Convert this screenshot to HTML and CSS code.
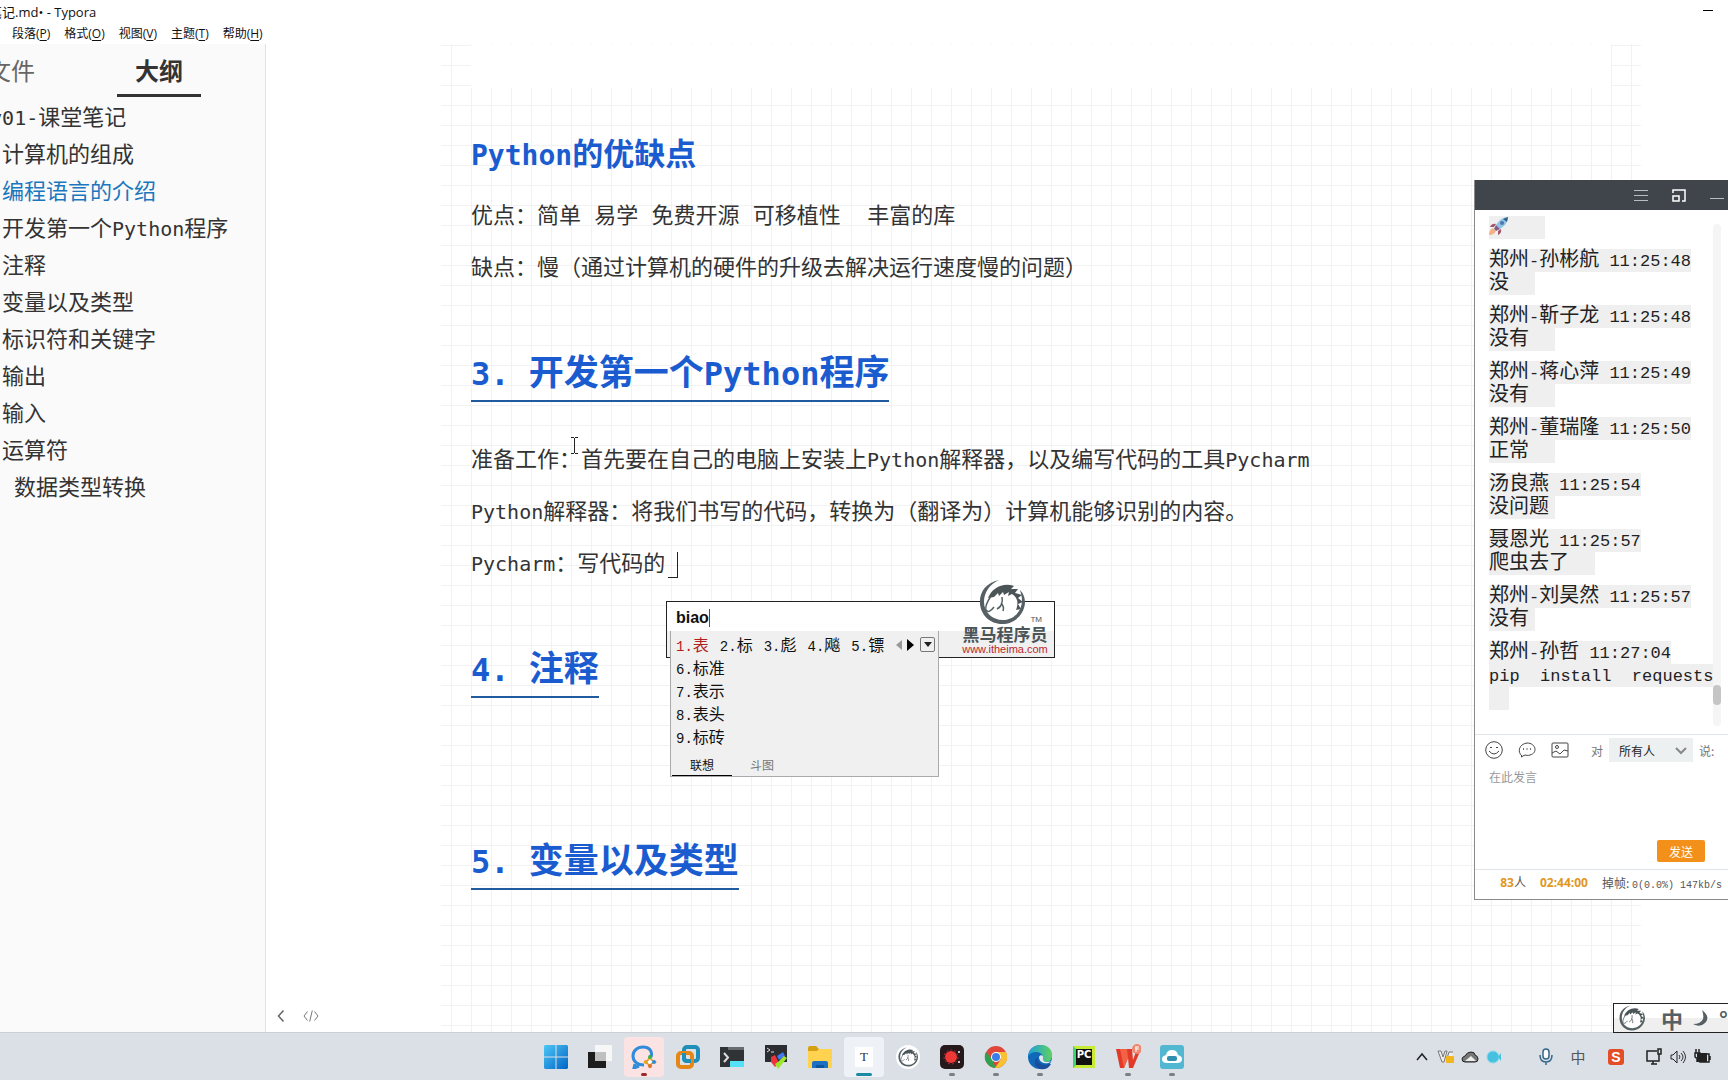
FILE: index.html
```
<!DOCTYPE html>
<html lang="zh-CN">
<head>
    <meta charset="UTF-8">
    <meta name="viewport" content="width=device-width, initial-scale=1.0">
    <title>课堂笔记.md - Typora</title>
    <link rel="stylesheet" href="styles.css">
</head>
<body>
    <svg class="sprite" aria-hidden="true">
        <symbol id="horse" viewBox="0 0 46 46">
            <circle cx="23" cy="24" r="19" fill="#fff"/>
            <path d="M20 1C7 4 0 13 1 25c1 11 10 20 22 20 12 0 22-9 23-21 0-6-2-10-5-13 1 4 2 7 2 10 0 11-8 20-19 20S5 33 5 23C5 13 11 5 20 1z" fill="#566064"/>
            <path d="M9 19C13 9 24 3 35 7l-3 3 7 0-3 4 7 2-4 3 5 4-5 2 3 5-5 1c3-8 1-13-4-16l-4 2 1-4-5 3-1-3-4 4-1-3-4 4z" fill="#4b5558"/>
            <path d="M12 17C8 23 6 28 7 31c2 3 5 1 8-3M23 18c1 6-1 10-5 12M22 24c2 2 3 5 2 8" fill="none" stroke="#566064" stroke-width="1.5"/>
        </symbol>
    </svg>

    <div class="desktop">
        <div class="app">
            <header class="titlebar">
                <div class="title-row">
                    <span class="title">堂笔记.md• - Typora</span>
                    <button class="minimize" aria-label="最小化"></button>
                </div>
                <nav class="menu">
                    <button>段落(<u>P</u>)</button>
                    <button>格式(<u>O</u>)</button>
                    <button>视图(<u>V</u>)</button>
                    <button>主题(<u>T</u>)</button>
                    <button>帮助(<u>H</u>)</button>
                </nav>
            </header>

            <div class="workspace">
                <aside class="sidebar">
                    <div class="tabs">
                        <button class="tab">文件</button>
                        <button class="tab active">大纲</button>
                    </div>
                    <nav class="outline">
                        <a href="#top" class="level-1"><span class="en">Day01-</span>课堂笔记</a>
                        <a href="#top">计算机的组成</a>
                        <a href="#top" class="active">编程语言的介绍</a>
                        <a href="#first">开发第一个<span class="en">Python</span>程序</a>
                        <a href="#comment">注释</a>
                        <a href="#types">变量以及类型</a>
                        <a href="#top">标识符和关键字</a>
                        <a href="#top">输出</a>
                        <a href="#top">输入</a>
                        <a href="#top">运算符</a>
                        <a href="#top" class="level-3">数据类型转换</a>
                    </nav>
                </aside>

                <main class="editor">
                    <article class="note" id="top">
                        <div class="code-block"></div>
                        <h3><span class="en">Python</span>的优缺点</h3>
                        <p>优点：简单<span class="en space"> </span>易学<span class="en space"> </span>免费开源<span class="en space"> </span>可移植性<span class="en space">  </span>丰富的库</p>
                        <p>缺点：慢（通过计算机的硬件的升级去解决运行速度慢的问题）</p>
                        <h2 id="first"><span class="en">3. </span>开发第一个<span class="en">Python</span>程序</h2>
                        <p>准备工作：首先要在自己的电脑上安装上<span class="en">Python</span>解释器，以及编写代码的工具<span class="en">Pycharm</span></p>
                        <p><span class="en">Python</span>解释器：将我们书写的代码，转换为（翻译为）计算机能够识别的内容。</p>
                        <p><span class="en">Pycharm</span>：写代码的<span class="composing"></span></p>
                        <h2 id="comment"><span class="en">4. </span>注释</h2>
                        <p></p>
                        <h2 id="types"><span class="en">5. </span>变量以及类型</h2>
                    </article>
                    <div class="editor-tools">
                        <button aria-label="收起侧边栏"><svg width="16" height="16" viewBox="0 0 16 16"><path d="M10.500 2.500L5.500 8l5 5.500" fill="none" stroke="#666" stroke-width="1.500"/></svg></button>
                        <button aria-label="源代码模式"><svg width="16" height="16" viewBox="0 0 16 16"><path d="M4.500 3.500L1 8l3.500 4.500M11.500 3.500L15 8l-3.500 4.500M9.300 2.500L6.700 13.500" fill="none" stroke="#777"/></svg></button>
                    </div>
                </main>
            </div>
        </div>

        <footer class="taskbar">
            <div></div>
            <div class="task-icons">
                <button class="task" aria-label="开始"><svg width="24" height="24"><defs><linearGradient id="win" x2="1" y2="1"><stop stop-color="#4cc8f5"/><stop offset="1" stop-color="#0063c6"/></linearGradient></defs><path d="M1 0h10.500v11.500H0V1zM12.500 0H23l1 1v10.500H12.500zM0 12.500h11.500V24H1l-1-1zM12.500 12.500H24V23l-1 1H12.500z" fill="url(#win)"/></svg></button>
                <button class="task" aria-label="任务视图"><svg width="24" height="24"><rect x="0" y="7" width="18" height="16" fill="#1d1d1d"/><rect x="7" y="0" width="17" height="16" fill="#f7f7f7"/><rect x="7" y="7" width="11" height="9" fill="#bfc0bf"/></svg></button>
                <button class="task alert" aria-label="企业微信"><svg width="26" height="24"><path d="M4 19l-1 4 5-2M20 12C22 6 18 2 12 2 6 2 2 6 2 11c0 5 4 9 11 9" fill="none" stroke="#2f8cdb" stroke-width="3"/><path d="M19 11q0 4 5 6-5 1-5 6-1-5-6-6 5-1 6-6z" fill="#fff" stroke="#e99b22" stroke-width="1.500"/><circle cx="19" cy="12" r="2" fill="#3aaf4c"/><circle cx="23" cy="17" r="2" fill="#2f8cdb"/><circle cx="19" cy="21" r="2" fill="#e0702f"/><circle cx="15" cy="17" r="2" fill="#e9a322"/></svg></button>
                <button class="task" aria-label="VMware"><svg width="26" height="26"><rect x="9" y="3" width="14" height="14" rx="3" fill="none" stroke="#1d8fb8" stroke-width="4"/><rect x="3" y="9" width="14" height="14" rx="3" fill="none" stroke="#e48716" stroke-width="4"/><path d="M9 9v5q0 3 3 3h4" fill="none" stroke="#1d8fb8" stroke-width="4"/></svg></button>
                <button class="task" aria-label="终端"><svg width="24" height="20"><rect width="24" height="20" fill="#303336"/><path d="M8 0h16v3H8z" fill="#686b6e"/><path d="M4 6l4 4.500L4 15" fill="none" stroke="#ddd" stroke-width="2"/><path d="M10 14h14v6H10z" fill="#54e0f6"/></svg></button>
                <button class="task" aria-label="FinalShell"><svg width="24" height="24"><path d="M1 0h22v17H1z" fill="#2b2d30"/><path d="M3 3l3 2-3 2M7 7h3" stroke="#ddd" fill="none"/><path d="M7 12l4-2 4 8-4 4-4-5z" fill="#f0323a"/><path d="M13 11l6-4 2 4-6 4z" fill="#4478f0"/><path d="M11 19l3-2 6-6 3 2-9 11z" fill="#9be62c"/></svg></button>
                <button class="task" aria-label="文件资源管理器"><svg width="26" height="24"><path d="M1 3q0-2 2-2h6l3 3h12q1 0 1 2v16H1z" fill="#d6a013"/><path d="M1 6h9l2-2h13v18q0 1-2 1H2q-1 0-1-1z" fill="#ffd34f"/><path d="M5 23v-5q0-2 2-2h12q2 0 2 2v5z" fill="#1c6fc2"/><path d="M9 23v-3h8v3z" fill="#0e559d"/></svg></button>
                <button class="task current" aria-label="Typora"><span class="typora">T</span></button>
                <button class="task" aria-label="黑马程序员"><span class="round"><svg width="20" height="20"><use href="#horse"/></svg></span></button>
                <button class="task running" aria-label="录屏"><svg width="24" height="24"><rect width="24" height="24" rx="5" fill="#25191c"/><circle cx="11" cy="12" r="6" fill="#ee3838"/><circle cx="11" cy="12" r="7" fill="none" stroke="#a32a2e" stroke-dasharray="2 2"/><circle cx="19" cy="7" r="1" fill="#fff"/><circle cx="19" cy="17" r="1" fill="#fff"/></svg></button>
                <button class="task running" aria-label="Chrome"><svg width="24" height="24"><circle cx="12" cy="12" r="11" fill="#e0473a"/><path d="M2 7L8 14l4 9C4 23-2 14 2 7z" fill="#32a052"/><path d="M12 7h10c4 8-3 17-11 16l6-9z" fill="#f8c332"/><circle cx="12" cy="12" r="5" fill="#fff"/><circle cx="12" cy="12" r="4" fill="#3c7ee8"/></svg></button>
                <button class="task running" aria-label="Edge"><svg width="26" height="26"><defs><linearGradient id="edge"><stop stop-color="#1da0de"/><stop offset="1" stop-color="#5fd060"/></linearGradient></defs><circle cx="13" cy="13" r="12" fill="#1068b8"/><path d="M1 12C2 5 7 1 14 1c8 0 12 6 11 12-1 5-6 6-9 4-2-1 0-2 0-4C15 7 5 6 1 12z" fill="url(#edge)"/><path d="M11 13c-2 5 4 10 11 7l2 0c-3 5-7 6-11 5-6-2-7-9-2-12z" fill="#1b4f9d"/><path d="M12 13c1-3 5-2 4 1-1 4 4 5 8 3-2 4-12 3-12-4z" fill="#dfe8ee"/></svg></button>
                <button class="task" aria-label="PyCharm"><span class="pycharm">PC</span></button>
                <button class="task running" aria-label="WPS"><svg width="26" height="26"><path d="M1 5h6l1 11 4-11h5l1 11L22 5h4l-8 19h-4l-1-10-4 10H5z" fill="#e23a28"/><path d="M5 5l4 19 4-10-1-9z" fill="#f36245"/><circle cx="22" cy="5" r="5" fill="#f1876e"/><path d="M20 3h4M20 5h4M21 3v5" stroke="#fff"/></svg></button>
                <button class="task running" aria-label="云课堂"><svg width="24" height="24"><rect width="24" height="24" rx="3" fill="#52b8d1"/><path d="M7 18q-5 0-5-4 0-3 4-4 1-5 6-5 5 0 6 5 4 1 4 4 0 4-5 4z" fill="#fff"/><rect x="7" y="11" width="10" height="5" rx="2" fill="#2e8fae"/></svg></button>
            </div>
            <div class="tray">
                <button class="tray-item" aria-label="显示隐藏的图标"><svg width="14" height="14"><path d="M2 10l5-6 5 6" fill="none" stroke="#222" stroke-width="1.500"/></svg></button>
                <button class="tray-item" aria-label="虚拟机"><svg width="18" height="14"><path d="M1 1h3l2 6 2-6h2L7 12H5zM16 2h-4q-3 5 0 9h3" fill="#eee" stroke="#777"/><rect x="9" y="6" width="8" height="7" rx="1" fill="#f3b71d"/></svg></button>
                <button class="tray-item" aria-label="OneDrive"><svg width="18" height="14"><path d="M4 12q-3 0-3-3 0-2 3-3 2-4 6-4 4 0 4 3 3 1 3 4 0 3-3 3z" fill="#777" stroke="#222"/><path d="M4 11l6-5 5 5z" fill="#eee"/></svg></button>
                <button class="tray-item" aria-label="小鱼"><svg width="16" height="16"><circle cx="7" cy="8" r="6" fill="#46c2e0" stroke="#8ad9ec"/><path d="M12 8l3-4v8z" fill="#46c2e0"/></svg></button>
                <button class="tray-item mic" aria-label="麦克风"><svg width="14" height="18"><rect x="4" y="1" width="6" height="10" rx="3" fill="#fff" stroke="#34678a" stroke-width="1.500"/><path d="M1 7q0 7 6 7t6-7M7 14v3" fill="none" stroke="#34678a" stroke-width="1.500"/></svg></button>
                <button class="tray-item lang">中</button>
                <button class="tray-item sogou">S</button>
                <button class="tray-item" aria-label="网络"><svg width="18" height="18"><path d="M12 3H2v10h12V9M6 16h6M8 13v3M13 1h3v5h-3zM14 6v3" fill="none" stroke="#222" stroke-width="1.500"/></svg></button>
                <button class="tray-item" aria-label="音量"><svg width="16" height="14"><path d="M1 5h2l4-4v12L3 9H1z" fill="none" stroke="#222"/><path d="M9 5q2 2 0 4M11 3q4 4 0 8M13 1q5 6 0 12" fill="none" stroke="#333"/></svg></button>
                <button class="tray-item" aria-label="电池"><svg width="18" height="16"><path d="M4 4h10v9H4z" fill="#222"/><path d="M7 5h9v8H7zM17 7v4M3 0v4M6 0v4M2 4h5v3q0 2-3 2-2 0-2-2zM4 9v4" fill="none" stroke="#222" stroke-width="1.500"/></svg></button>
            </div>
        </footer>

        <!-- input method window -->
        <section class="ime">
            <div class="ime-box">
                <div class="ime-type">
                    <input type="text" value="biao" aria-label="拼音"><span class="ime-caret"></span>
                </div>
            </div>
            <div class="ime-brand">
                <svg width="46" height="46"><use href="#horse"/></svg>
                <small>TM</small>
                <strong>黑马程序员</strong>
                <span>www.itheima.com</span>
            </div>
            <div class="candidates">
                <div class="candidate-row">
                    <button class="chosen"><i>1.</i>表</button>
                    <button><i>2.</i>标</button>
                    <button><i>3.</i>彪</button>
                    <button><i>4.</i>飚</button>
                    <button><i>5.</i>镖</button>
                    <button class="pager" aria-label="翻页"><svg width="20" height="12"><path d="M7 1v10L1 6z" fill="#999"/><path d="M12 0v12l7-6z" fill="#000"/></svg></button>
                    <button class="more" aria-label="更多"><svg width="8" height="5"><path d="M0 0h8L4 5z" fill="#222"/></svg></button>
                </div>
                <button><i>6.</i>标准</button>
                <button><i>7.</i>表示</button>
                <button><i>8.</i>表头</button>
                <button><i>9.</i>标砖</button>
                <div class="ime-tabs">
                    <button class="active">联想</button>
                    <button>斗图</button>
                </div>
            </div>
        </section>

        <!-- floating input method bar -->
        <section class="ime-bar">
            <svg width="26" height="26"><use href="#horse"/></svg>
            <b class="zh">中</b>
            <svg width="16" height="18"><path d="M9 1q9 7 3 13-5 5-12 1 8 0 10-5 1-4-1-9z" fill="#566064"/></svg>
            <b>°</b>
        </section>

        <!-- classroom chat -->
        <section class="chat">
            <header class="chat-header">
                <button aria-label="菜单"><svg width="14" height="12"><path d="M0 1.500h14M0 6.500h14M0 11.500h14" stroke="#b9bcc0"/></svg></button>
                <button aria-label="小窗"><svg width="14" height="13"><path d="M1 4V1h12v11h-3" fill="none" stroke="#fff" stroke-width="1.500"/><path d="M1 7h6v5H1z" fill="none" stroke="#fff" stroke-width="1.500"/></svg></button>
                <button aria-label="最小化"><svg width="14" height="12"><path d="M0 9.500h14" stroke="#b9bcc0"/></svg></button>
            </header>
            <div class="messages">
                <div class="message">
                    <div class="text rocket"><svg width="20" height="20" viewBox="0 0 20 20"><path d="M19 1q-7 0-12 8l4 4q8-5 8-12z" fill="#8fc4e6"/><path d="M14 3l4 3 1-5z" fill="#2f5f86"/><path d="M7 8q-4-1-6 3l4 0zM12 13q1 4-3 6l0-4z" fill="#a3546a"/><path d="M7 9l4 4-4 2-2-2z" fill="#7e5c88"/><path d="M4 12q-4 2-4 7 5 0 7-4z" fill="#f4b183"/><circle cx="13" cy="7" r="2" fill="#4a78a8"/></svg></div>
                </div>
                <div class="message"><div class="user">郑州<i>-</i>孙彬航<i> 11:25:48</i></div><div class="text wide">没</div></div>
                <div class="message"><div class="user">郑州<i>-</i>靳子龙<i> 11:25:48</i></div><div class="text wide">没有</div></div>
                <div class="message"><div class="user">郑州<i>-</i>蒋心萍<i> 11:25:49</i></div><div class="text wide">没有</div></div>
                <div class="message"><div class="user">郑州<i>-</i>董瑞隆<i> 11:25:50</i></div><div class="text wide">正常</div></div>
                <div class="message"><div class="user">汤良燕<i> 11:25:54</i></div><div class="text">没问题</div></div>
                <div class="message"><div class="user">聂恩光<i> 11:25:57</i></div><div class="text wide">爬虫去了</div></div>
                <div class="message"><div class="user">郑州<i>-</i>刘昊然<i> 11:25:57</i></div><div class="text">没有</div></div>
                <div class="message"><div class="user">郑州<i>-</i>孙哲<i> 11:27:04</i></div><div class="text code"><i>pip  install  requests</i></div><div class="text blank"></div></div>
                <div class="scrollbar"><div class="thumb"></div></div>
            </div>
            <div class="chat-tools">
                <button aria-label="表情"><svg width="18" height="18" viewBox="0 0 18 18" fill="none" stroke="#444"><circle cx="9" cy="9" r="8.300"/><path d="M4 10q5 6 10 0M5 7q1-2 2 0M11 7q1-2 2 0"/></svg></button>
                <button aria-label="快捷回复"><svg width="18" height="18" viewBox="0 0 18 18" fill="none" stroke="#444"><path d="M4 15c-5-4-3-12 5-13 9 0 11 10 3 12-2 1-4 0-5 0l-4 2z"/><path d="M5 8h1M8.500 8h1M12 8h1" stroke-width="1.500"/></svg></button>
                <button aria-label="图片"><svg width="18" height="18" viewBox="0 0 18 18" fill="none" stroke="#444"><rect x="1" y="2" width="16" height="14" rx="1"/><circle cx="6" cy="6" r="1.500"/><path d="M1 12l4-2 4 3 4-4 4 1"/></svg></button>
                <label for="receiver">对</label>
                <div class="select-wrap">
                    <select id="receiver"><option>所有人</option></select>
                    <svg width="12" height="8"><path d="M1 1l5 5 5-5" fill="none" stroke="#888" stroke-width="2"/></svg>
                </div>
                <span>说:</span>
            </div>
            <textarea placeholder="在此发言" aria-label="在此发言"></textarea>
            <div class="send-row"><button class="send">发送</button></div>
            <footer class="chat-status">
                <span><b>83</b>人</span>
                <b>02:44:00</b>
                <span>掉帧: <i>0(0.0%) 147kb/s</i></span>
            </footer>
        </section>

        <svg class="mouse" width="7" height="17"><path d="M0 .5h3M4 .5h3M3.500 1v15M0 16.500h3M4 16.500h3" stroke="#222"/></svg>
    </div>
</body>
</html>
```
FILE: styles.css
```
* {
    box-sizing: border-box;
}
body {
    margin: 0;
    font-family: "Noto Sans CJK SC", sans-serif;
    color: #333;
    background: #fff;
}
button {
    margin: 0;
    padding: 0;
    border: none;
    background: none;
    font: inherit;
    color: inherit;
    cursor: pointer;
}
svg {
    display: block;
}
i {
    font-style: normal;
}
.sprite {
    display: none;
}
.desktop {
    position: relative;
    display: flex;
    flex-direction: column;
    height: 100vh;
    overflow: hidden;
}

/* the editor window is wider than the desktop on both sides */
.app {
    flex: 1;
    min-height: 0;
    display: flex;
    flex-direction: column;
    margin: 0 -88px 0 -60px;
}
.en {
    font-family: "DejaVu Sans Mono", monospace;
    font-size: 20px;
    white-space: pre;
}
.titlebar {
    height: 44px;
    color: #111;
}
.title-row {
    display: flex;
    justify-content: space-between;
    height: 24px;
    padding: 0 103px 0 36px;
    font-family: "Open Sans", "Noto Sans CJK SC", sans-serif;
    font-size: 13px;
    line-height: 24px;
}
.minimize {
    width: 10px;
    height: 11px;
    border-bottom: 1px solid #000;
}
.menu {
    display: flex;
    gap: 14px;
    padding-left: 72px;
    font-family: "Open Sans", "Noto Sans CJK SC", sans-serif;
    font-size: 12px;
    line-height: 20px;
}
.menu u {
    text-underline-offset: 2px;
}
.workspace {
    flex: 1;
    min-height: 0;
    display: flex;
}
.sidebar {
    width: 326px;
    border-right: 1px solid #e2e2e2;
    background: #fafafa;
}
.tabs {
    display: flex;
    gap: 64px;
    padding-left: 29px;
    font-size: 24px;
    line-height: 50px;
    color: #666;
}
.tab {
    width: 84px;
    height: 53px;
    padding-top: 1px;
    border-bottom: 3px solid transparent;
}
.tab.active {
    border-color: #333;
    color: #333;
    font-weight: bold;
}
.outline {
    font-size: 22px;
    line-height: 37px;
}
.outline a {
    display: block;
    height: 37px;
    padding-left: 62px;
    color: #333;
    text-decoration: none;
    white-space: nowrap;
}
.outline .level-1 {
    padding-left: 26px;
}
.outline .level-3 {
    padding-left: 74px;
}
.outline .active {
    color: #1a77bd;
}
.editor {
    position: relative;
    flex: 1;
    overflow: hidden;
}
.note {
    max-width: 1200px;
    min-height: 100%;
    margin: 0 auto;
    padding: 1px 30px 0;
    background-image: linear-gradient(#f2f2f2 1px, transparent 1px), linear-gradient(90deg, #f2f2f2 1px, transparent 1px);
    background-size: 20px 20px;
    background-position: 10px 1px;
}
.code-block {
    height: 43px;
    background: #fff;
}
.note h2,
.note h3 {
    color: #1a5cd0;
    font-weight: bold;
}
.note h3 {
    margin: 39px 0 16px;
    font-size: 31px;
    line-height: 50px;
}
.note h3 .en {
    font-size: 28px;
}
.note h2 {
    width: fit-content;
    height: 52px;
    margin: 66px 0 39px;
    border-bottom: 2px solid #215a9e;
    font-size: 35px;
    line-height: 40px;
}
.note h2 .en {
    font-size: 32px;
}
.note p {
    height: 35px;
    margin: 0 0 17px;
    font-size: 22px;
    line-height: 33px;
    white-space: nowrap;
}
.note .space {
    font-size: 22px;
}
.composing {
    display: inline-block;
    width: 10px;
    height: 26px;
    margin-left: 3px;
    border-right: 1px solid #222;
    border-bottom: 1px solid #222;
    vertical-align: -7px;
}
.editor-tools {
    position: absolute;
    left: 7px;
    bottom: 8px;
    display: flex;
    gap: 14px;
}

/* taskbar */
.taskbar {
    display: grid;
    grid-template-columns: 1fr auto 1fr;
    height: 48px;
    border-top: 1px solid #ccd0d5;
    background: #dbdfe6;
}
.task-icons {
    display: flex;
    align-items: center;
}
.task {
    position: relative;
    display: flex;
    align-items: center;
    justify-content: center;
    width: 40px;
    height: 40px;
    margin: 0 2px;
    border-radius: 4px;
}
.task.alert {
    background: #fbe3e3;
}
.task.current {
    background: #eef2f6;
}
.task::after {
    position: absolute;
    bottom: 1px;
    width: 6px;
    height: 3px;
    border-radius: 2px;
}
.running::after,
.alert::after,
.current::after {
    content: "";
    background: #7b7e84;
}
.alert::after {
    background: #9c2b2b;
}
.current::after {
    width: 16px;
    background: #1b8ba5;
}
.typora {
    width: 18px;
    height: 20px;
    background: #fff;
    font-family: "Liberation Serif", serif;
    font-size: 13px;
    line-height: 20px;
}
.round {
    display: flex;
    align-items: center;
    justify-content: center;
    width: 24px;
    height: 24px;
    border-radius: 50%;
    background: #fff;
}
.pycharm {
    width: 22px;
    height: 22px;
    border: 3px solid #c6ea35;
    border-left-color: #3bd66c;
    background: #111;
    color: #fff;
    font: bold 10px "DejaVu Sans", sans-serif;
}
.tray {
    display: flex;
    align-items: center;
    justify-content: flex-end;
    padding-right: 14px;
}
.tray-item {
    display: flex;
    align-items: center;
    justify-content: center;
    width: 24px;
    height: 32px;
}
.tray-item.mic {
    margin-left: 28px;
}
.lang {
    width: 34px;
    margin: 0 3px;
    color: #555;
    font-size: 15px;
}
.sogou {
    width: 16px;
    height: 16px;
    margin: 0 18px 0 10px;
    border-radius: 3px;
    background: #e34d28;
    color: #fff;
    font: bold 14px "Liberation Sans", sans-serif;
}

/* input method */
.ime {
    position: absolute;
    left: 666px;
    top: 601px;
    width: 389px;
    font-size: 16px;
    color: #111;
}
.ime-box {
    height: 57px;
    border: 1px solid #222;
    background: #f0f0f0;
}
.ime-type {
    display: flex;
    align-items: center;
    height: 29px;
    padding: 2px 0 0 9px;
    background: #fff;
}
.ime-type input {
    width: 33px;
    padding: 0;
    border: none;
    outline: none;
    font: bold 16px "Liberation Sans", sans-serif;
    color: #111;
}
.ime-caret {
    width: 1px;
    height: 18px;
    background: #b22;
}
.ime-brand {
    position: absolute;
    right: 7px;
    top: -22px;
    width: 86px;
    display: flex;
    flex-direction: column;
    align-items: center;
    color: #4b5558;
    white-space: nowrap;
}
.ime-brand svg {
    margin-right: 6px;
}
.ime-brand small {
    position: absolute;
    right: 6px;
    top: 36px;
    font: 8px "Liberation Sans", sans-serif;
}
.ime-brand strong {
    font-size: 17px;
    line-height: 18px;
}
.ime-brand span {
    color: #b8282e;
    font: 11px "Liberation Sans", sans-serif;
}
.candidates {
    position: absolute;
    left: 4px;
    top: 30px;
    width: 269px;
    padding-left: 5px;
    border: 1px solid #aaa;
    border-top: none;
    background: #f0f0f0;
}
.candidates button {
    display: block;
    height: 23px;
    line-height: 23px;
}
.candidates i {
    font-family: "Liberation Mono", monospace;
    font-size: 14px;
}
.candidate-row {
    display: flex;
    align-items: center;
    gap: 11px;
    padding-top: 2px;
}
.candidate-row .chosen {
    color: #b01e1e;
}
.candidate-row .pager {
    height: 12px;
}
.candidate-row .more {
    display: flex;
    align-items: center;
    justify-content: center;
    width: 15px;
    height: 15px;
    margin-left: -6px;
    border: 1px solid #777;
    border-radius: 2px;
}
.ime-tabs {
    display: flex;
    margin-left: -4px;
    padding-top: 5px;
    font-size: 12px;
    color: #777;
}
.ime-tabs button {
    width: 60px;
}
.ime-tabs .active {
    border-bottom: 1px solid #000;
    color: #111;
}
.ime-bar {
    position: absolute;
    right: -16px;
    bottom: 47px;
    width: 131px;
    height: 30px;
    display: flex;
    align-items: center;
    gap: 10px;
    padding-left: 5px;
    border: 1px solid #222;
    background: linear-gradient(#fff 50%, #efefef 50%);
    color: #566064;
    font-size: 22px;
    line-height: 28px;
}
.ime-bar .zh {
    padding-left: 6px;
}

/* chat */
.chat {
    position: absolute;
    right: 0;
    top: 180px;
    width: 254px;
    border: 1px solid #8a8a8a;
    border-width: 0 0 1px 1px;
    background: #fff;
    color: #222;
}
.chat-header {
    display: flex;
    align-items: center;
    justify-content: flex-end;
    gap: 24px;
    height: 30px;
    padding-right: 4px;
    background: #40454c;
}
.messages {
    position: relative;
    height: 524px;
    padding: 6px 0 0 14px;
    font-size: 20px;
    line-height: 18px;
}
.message {
    margin-bottom: 10px;
}
.user,
.text {
    width: fit-content;
    height: 23px;
    background: #efefef;
    white-space: pre;
}
.text {
    padding-right: 6px;
}
.text.wide {
    padding-right: 26px;
}
.text.rocket {
    padding-right: 36px;
}
.text.code {
    padding-right: 0;
}
.text.blank {
    width: 20px;
}
.messages i {
    font-family: "Liberation Mono", monospace;
    font-size: 17px;
}
.scrollbar {
    position: absolute;
    top: 14px;
    right: 7px;
    bottom: 8px;
    width: 8px;
    border-radius: 4px;
    background: #f5f5f5;
    display: flex;
    align-items: flex-end;
}
.thumb {
    width: 8px;
    height: 20px;
    margin-bottom: 21px;
    border-radius: 4px;
    background: #c5c5c5;
}
.chat-tools {
    display: flex;
    align-items: center;
    gap: 15px;
    height: 31px;
    padding-left: 10px;
    border-top: 1px solid #dfe4e8;
    font-size: 12px;
    color: #777;
}
.chat-tools label {
    margin: 0 -9px 0 7px;
}
.chat-tools > span {
    margin-left: -9px;
}
.select-wrap {
    position: relative;
}
.select-wrap svg {
    position: absolute;
    right: 6px;
    top: 9px;
    pointer-events: none;
}
.select-wrap select {
    appearance: none;
    width: 84px;
    height: 24px;
    padding: 0 10px;
    border: none;
    border-radius: 0;
    background: #edf0f1;
    color: #222;
    font: 12px "Noto Sans CJK SC", sans-serif;
}
.chat textarea {
    display: block;
    width: 100%;
    height: 75px;
    padding: 3px 14px;
    border: none;
    outline: none;
    resize: none;
    font: 12px "Noto Sans CJK SC", sans-serif;
}
.chat textarea::placeholder {
    color: #999;
}
.send-row {
    display: flex;
    justify-content: flex-end;
    height: 29px;
    padding-right: 23px;
}
.send {
    width: 48px;
    height: 22px;
    border-radius: 2px;
    background: #f39019;
    color: #fff;
    font-size: 12px;
}
.chat-status {
    display: flex;
    align-items: center;
    justify-content: flex-end;
    gap: 14px;
    height: 30px;
    padding: 0 6px 5px 0;
    border-top: 1px solid #dfe4e8;
    font-size: 12px;
    color: #555;
    white-space: nowrap;
}
.chat-status b {
    color: #e0981f;
    font-family: "Open Sans", sans-serif;
    font-size: 12px;
}
.chat-status i {
    font-family: "Liberation Mono", monospace;
    font-size: 10px;
}
.mouse {
    position: absolute;
    left: 571px;
    top: 437px;
}
```
